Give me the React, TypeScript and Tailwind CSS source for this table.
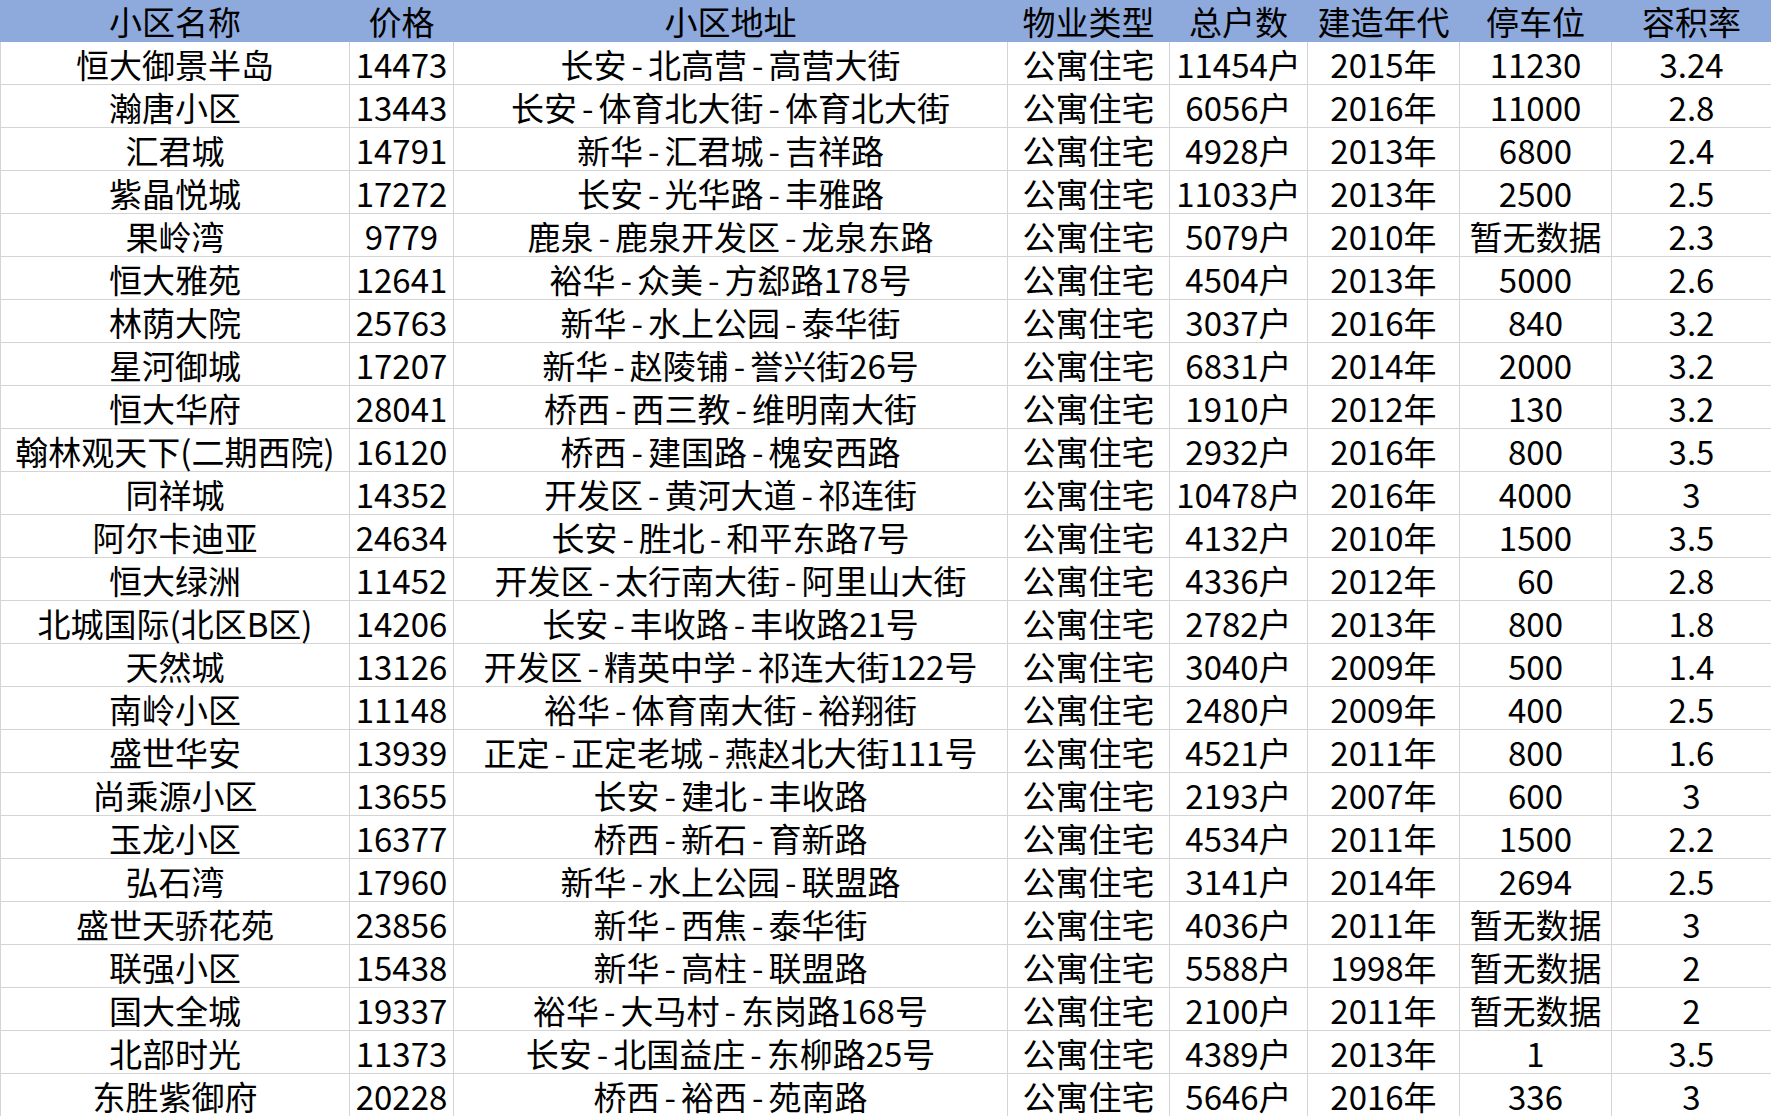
import React from "react";

const rows: string[][] = [
  ["恒大御景半岛", "14473", "长安-北高营-高营大街", "公寓住宅", "11454户", "2015年", "11230", "3.24"],
  ["瀚唐小区", "13443", "长安-体育北大街-体育北大街", "公寓住宅", "6056户", "2016年", "11000", "2.8"],
  ["汇君城", "14791", "新华-汇君城-吉祥路", "公寓住宅", "4928户", "2013年", "6800", "2.4"],
  ["紫晶悦城", "17272", "长安-光华路-丰雅路", "公寓住宅", "11033户", "2013年", "2500", "2.5"],
  ["果岭湾", "9779", "鹿泉-鹿泉开发区-龙泉东路", "公寓住宅", "5079户", "2010年", "暂无数据", "2.3"],
  ["恒大雅苑", "12641", "裕华-众美-方郄路178号", "公寓住宅", "4504户", "2013年", "5000", "2.6"],
  ["林荫大院", "25763", "新华-水上公园-泰华街", "公寓住宅", "3037户", "2016年", "840", "3.2"],
  ["星河御城", "17207", "新华-赵陵铺-誉兴街26号", "公寓住宅", "6831户", "2014年", "2000", "3.2"],
  ["恒大华府", "28041", "桥西-西三教-维明南大街", "公寓住宅", "1910户", "2012年", "130", "3.2"],
  ["翰林观天下(二期西院)", "16120", "桥西-建国路-槐安西路", "公寓住宅", "2932户", "2016年", "800", "3.5"],
  ["同祥城", "14352", "开发区-黄河大道-祁连街", "公寓住宅", "10478户", "2016年", "4000", "3"],
  ["阿尔卡迪亚", "24634", "长安-胜北-和平东路7号", "公寓住宅", "4132户", "2010年", "1500", "3.5"],
  ["恒大绿洲", "11452", "开发区-太行南大街-阿里山大街", "公寓住宅", "4336户", "2012年", "60", "2.8"],
  ["北城国际(北区B区)", "14206", "长安-丰收路-丰收路21号", "公寓住宅", "2782户", "2013年", "800", "1.8"],
  ["天然城", "13126", "开发区-精英中学-祁连大街122号", "公寓住宅", "3040户", "2009年", "500", "1.4"],
  ["南岭小区", "11148", "裕华-体育南大街-裕翔街", "公寓住宅", "2480户", "2009年", "400", "2.5"],
  ["盛世华安", "13939", "正定-正定老城-燕赵北大街111号", "公寓住宅", "4521户", "2011年", "800", "1.6"],
  ["尚乘源小区", "13655", "长安-建北-丰收路", "公寓住宅", "2193户", "2007年", "600", "3"],
  ["玉龙小区", "16377", "桥西-新石-育新路", "公寓住宅", "4534户", "2011年", "1500", "2.2"],
  ["弘石湾", "17960", "新华-水上公园-联盟路", "公寓住宅", "3141户", "2014年", "2694", "2.5"],
  ["盛世天骄花苑", "23856", "新华-西焦-泰华街", "公寓住宅", "4036户", "2011年", "暂无数据", "3"],
  ["联强小区", "15438", "新华-高柱-联盟路", "公寓住宅", "5588户", "1998年", "暂无数据", "2"],
  ["国大全城", "19337", "裕华-大马村-东岗路168号", "公寓住宅", "2100户", "2011年", "暂无数据", "2"],
  ["北部时光", "11373", "长安-北国益庄-东柳路25号", "公寓住宅", "4389户", "2013年", "1", "3.5"],
  ["东胜紫御府", "20228", "桥西-裕西-苑南路", "公寓住宅", "5646户", "2016年", "336", "3"],
];

const headers = ["小区名称", "价格", "小区地址", "物业类型", "总户数", "建造年代", "停车位", "容积率"];

const colClasses = [
  "w-[350px] border-l border-r",
  "w-[104px] border-r",
  "w-[554px] border-r",
  "w-[162px] border-r",
  "w-[138px] border-r",
  "w-[152px] border-r",
  "w-[152px] border-r",
  "w-[159px]",
];

function Cell({ text }: { text: string }) {
  const parts = text.split("-");
  return (
    <>
      {parts.map((p, i) => (
        <React.Fragment key={i}>
          {i > 0 && <span className="mx-[5px]">-</span>}
          {p}
        </React.Fragment>
      ))}
    </>
  );
}

export default function App() {
  return (
    <div
      className="w-[1771px] h-[1116px] overflow-hidden bg-white text-black"
      style={{ fontFamily: '"Noto Sans CJK SC", "Noto Sans", sans-serif' }}
    >
      <div className="flex h-[42px] bg-[#8ea9db]">
        {headers.map((h, i) => (
          <div
            key={i}
            className={`${colClasses[i]} border-transparent shrink-0 pt-[4px] text-center text-[33px] leading-[34px] whitespace-nowrap`}
          >
            {h}
          </div>
        ))}
      </div>
      {rows.map((r, ri) => (
        <div key={ri} className="flex h-[43px] border-b border-[#d4d4d4]">
          {r.map((c, ci) => (
            <div
              key={ci}
              className={`${colClasses[ci]} border-[#d4d4d4] shrink-0 pt-[3px] text-center text-[33px] leading-[39px] whitespace-nowrap`}
            >
              <Cell text={c} />
            </div>
          ))}
        </div>
      ))}
    </div>
  );
}
